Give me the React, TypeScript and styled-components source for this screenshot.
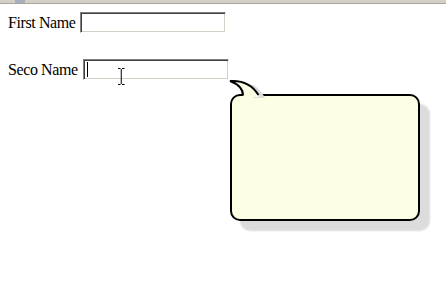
import React from "react";
import styled, { createGlobalStyle } from "styled-components";

const Global = createGlobalStyle`
  html, body { margin: 0; padding: 0; background: #ffffff; }
  body { font-family: "Liberation Serif", "Times New Roman", serif; font-size: 16px; color: #000; }
  #root { position: relative; width: 446px; height: 305px; overflow: hidden; }
`;

const Chrome = styled.div`
  height: 3px;
  background: #d4d0c8;
  border-bottom: 1px solid #a9a69e;
  position: relative;
`;

const ChromeTab = styled.span`
  display: block;
  margin-left: 15px;
  width: 10px;
  height: 3px;
  background: #a7afbd;
`;

const Form = styled.div`
  display: flex;
  flex-direction: column;
  gap: 26px;
  padding: 8px 8px 0 8px;
`;

const Row = styled.div`
  display: flex;
  align-items: center;
  height: 21px;
`;

const Label = styled.label<{ $gap: number }>`
  line-height: 21px;
  letter-spacing: -0.4px;
  margin-right: ${(p) => p.$gap}px;
  white-space: nowrap;
`;

const FieldWrap = styled.span`
  position: relative;
  display: block;
  width: 146px;
  height: 21px;
`;

const Field = styled.input`
  box-sizing: border-box;
  width: 146px;
  height: 21px;
  margin: 0;
  padding: 0 2px;
  outline: none;
  background: #fff;
  font-family: "Liberation Sans", Arial, sans-serif;
  font-size: 13px;
  border: 1px solid;
  border-color: #808080 #ffffff #ffffff #808080;
  box-shadow: inset 1px 1px 0 #404040, inset -1px -1px 0 #d4d0c8;
`;

const Caret = styled.span`
  position: absolute;
  left: 4px;
  top: 3px;
  width: 1px;
  height: 15px;
  background: #000;
`;

const Pointer = styled.svg`
  position: absolute;
  left: 117px;
  top: 68px;
`;

const Bubble = styled.div`
  position: absolute;
  left: 230px;
  top: 94px;
  box-sizing: border-box;
  width: 190px;
  height: 127px;
  background: #fdffe4;
  border: 2px solid #000;
  border-radius: 10px;
  box-shadow: 10px 10px 2px #dcdcdc;
`;

const Tail = styled.svg`
  position: absolute;
  left: 220px;
  top: 74px;
  overflow: visible;
`;

export default function App() {
  return (
    <>
      <Global />
      <Chrome>
        <ChromeTab />
      </Chrome>
      <Form>
        <Row>
          <Label $gap={4}>First Name</Label>
          <FieldWrap>
            <Field type="text" />
          </FieldWrap>
        </Row>
        <Row>
          <Label $gap={5}>Seco Name</Label>
          <FieldWrap>
            <Field type="text" />
            <Caret />
          </FieldWrap>
        </Row>
      </Form>
      <Pointer width="9" height="17" viewBox="0 0 9 17">
        <path
          d="M1 0.5 H3.5 M5 0.5 H7.5 M4.25 1 V16 M1 16.5 H3.5 M5 16.5 H7.5"
          stroke="#000"
          strokeWidth="1"
          fill="none"
        />
      </Pointer>
      <Bubble />
      <Tail width="50" height="30" viewBox="0 0 50 30">
        <path
          d="M29 22 C 29 15, 23 9, 14 7 C 28 6, 35 12, 40 22 Z"
          fill="#dcdcdc"
          transform="translate(5 2)"
        />
        <path
          d="M23 23 C 23 15, 18 10, 10 7 C 25 6, 33 12, 39 23 Z"
          fill="#fdffe4"
        />
        <path
          d="M23 21.5 C 23 15, 18 10, 10 7 C 25 6, 33 12, 38.5 21"
          stroke="#000"
          strokeWidth="2"
          fill="none"
        />
      </Tail>
    </>
  );
}
